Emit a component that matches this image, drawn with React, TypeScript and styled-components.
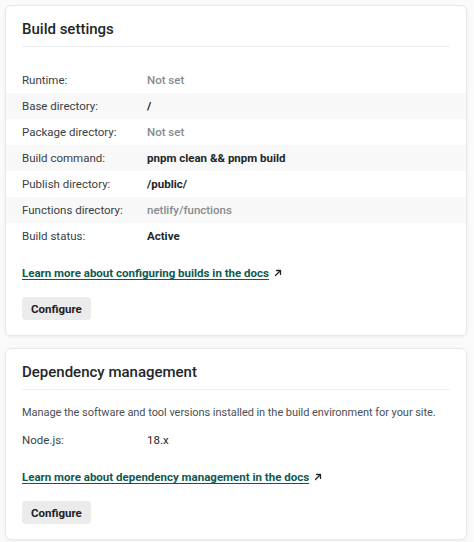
import React from "react";
import styled, { createGlobalStyle } from "styled-components";

const Global = createGlobalStyle`
  html, body { margin: 0; padding: 0; background: #fafafa; }
  body { font-family: Roboto, "Liberation Sans", Arial, sans-serif; -webkit-font-smoothing: antialiased; }
  * { box-sizing: border-box; }
`;

const Page = styled.div`
  display: flex;
  flex-direction: column;
  gap: 12px;
  padding: 5px 7px 4px 5px;
`;

const Card = styled.section`
  background: #fff;
  border: 1px solid #e7e8ea;
  border-radius: 6px;
  box-shadow: 0 1px 3px rgba(0, 0, 0, 0.06);
  padding: 11px 0 15px;
  display: flex;
  flex-direction: column;
`;

const Title = styled.h2`
  margin: 0 16px;
  font-size: 15px;
  line-height: 24px;
  font-weight: 500;
  color: #232629;
  padding-bottom: 5px;
  border-bottom: 1px solid #eceeef;
`;

const Table = styled.dl`
  margin: 20px 0 0;
  display: flex;
  flex-direction: column;
`;

const Row = styled.div<{ $striped?: boolean }>`
  display: grid;
  grid-template-columns: 125px 1fr;
  align-items: center;
  height: 26px;
  padding: 0 16px;
  background: ${(p) => (p.$striped ? "#f8f8f9" : "transparent")};
`;

const Label = styled.dt`
  margin: 0;
  font-size: 11.5px;
  color: #3a3e43;
`;

const Value = styled.dd<{ $tone?: "muted" | "strong" | "plain" }>`
  margin: 0;
  font-size: 11.5px;
  font-weight: ${(p) => (p.$tone === "strong" ? 700 : p.$tone === "muted" ? 500 : 400)};
  color: ${(p) => (p.$tone === "muted" ? "#868b90" : "#232629")};
`;

const Description = styled.p`
  margin: 14px 16px 5px;
  font-size: 11px;
  line-height: 18px;
  letter-spacing: -0.05px;
  white-space: nowrap;
  color: #4a4f55;
`;

const Link = styled.a`
  margin: 15px 16px 0;
  font-size: 11.5px;
  line-height: 18px;
  font-weight: 700;
  color: #0d5a52;
  display: inline-flex;
  align-items: center;
  gap: 5px;
  align-self: flex-start;
  cursor: pointer;
`;

const LinkText = styled.span`
  text-decoration: underline;
  text-underline-offset: 2px;
`;

const Button = styled.button`
  margin: 15px 16px 0;
  align-self: flex-start;
  height: 23px;
  padding: 0 9px;
  border: none;
  border-radius: 4px;
  background: #ebebec;
  font-family: inherit;
  font-size: 11.5px;
  font-weight: 700;
  color: #1e2124;
  cursor: pointer;
`;

const Arrow = () => (
  <svg width="8" height="8" viewBox="0 0 8 8" fill="none">
    <path d="M1.5 6.5L6.3 1.7" stroke="#232629" strokeWidth="1.3" strokeLinecap="round" />
    <path d="M2.6 1.5H6.5V5.4" stroke="#232629" strokeWidth="1.3" strokeLinecap="round" strokeLinejoin="round" />
  </svg>
);

const buildRows: { label: string; value: string; tone: "muted" | "strong" | "plain" }[] = [
  { label: "Runtime:", value: "Not set", tone: "muted" },
  { label: "Base directory:", value: "/", tone: "strong" },
  { label: "Package directory:", value: "Not set", tone: "muted" },
  { label: "Build command:", value: "pnpm clean && pnpm build", tone: "strong" },
  { label: "Publish directory:", value: "/public/", tone: "strong" },
  { label: "Functions directory:", value: "netlify/functions", tone: "muted" },
  { label: "Build status:", value: "Active", tone: "strong" },
];

export default function App() {
  return (
    <>
      <Global />
      <Page>
        <Card>
          <Title>Build settings</Title>
          <Table>
            {buildRows.map((r, i) => (
              <Row key={r.label} $striped={i % 2 === 1}>
                <Label>{r.label}</Label>
                <Value $tone={r.tone}>{r.value}</Value>
              </Row>
            ))}
          </Table>
          <Link>
            <LinkText>Learn more about configuring builds in the docs</LinkText>
            <Arrow />
          </Link>
          <Button>Configure</Button>
        </Card>
        <Card>
          <Title>Dependency management</Title>
          <Description>
            Manage the software and tool versions installed in the build environment for your site.
          </Description>
          <Row>
            <Label>Node.js:</Label>
            <Value $tone="plain">18.x</Value>
          </Row>
          <Link>
            <LinkText>Learn more about dependency management in the docs</LinkText>
            <Arrow />
          </Link>
          <Button>Configure</Button>
        </Card>
      </Page>
    </>
  );
}
